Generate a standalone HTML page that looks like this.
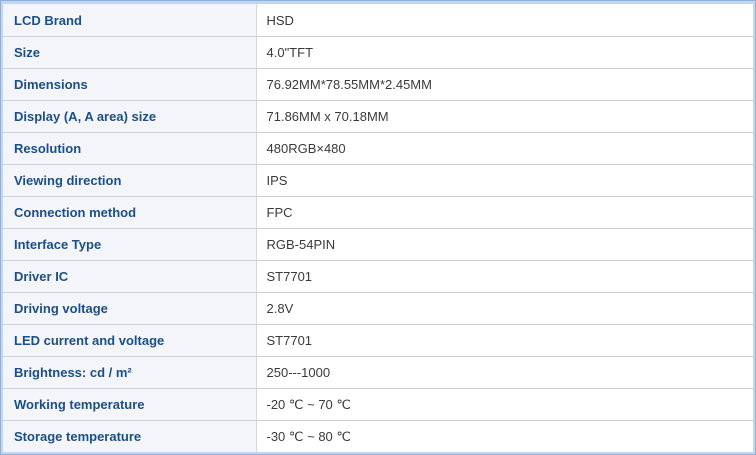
<!DOCTYPE html>
<html><head><meta charset="utf-8"><style>
*{margin:0;padding:0;box-sizing:border-box}
body{width:756px;height:455px;background:#fff;overflow:hidden;font-family:"Liberation Sans",Arial,sans-serif}
.wrap{position:absolute;left:0;top:0;width:756px;height:455px;border:1px solid #8fb0d8;background:#c2d6ee;padding:3px 2px 1px 2px}
table{border-collapse:collapse;width:750px;background:#fff}
td{height:32px;border-top:1px solid #cfcfcf;font-size:13px;vertical-align:middle;padding-top:1px}
tr:first-child td{border-top:none;height:32px}
td.k{width:253px;background:#f3f5f8;color:#1b4f86;font-weight:bold;padding-left:11px;border-right:1px solid #d6d6d6}
td.v{color:#3a3a3a;padding-left:10px}
</style></head><body><div class="wrap"><table>
<tr><td class="k">LCD Brand</td><td class="v">HSD</td></tr>
<tr><td class="k">Size</td><td class="v">4.0"TFT</td></tr>
<tr><td class="k">Dimensions</td><td class="v">76.92MM*78.55MM*2.45MM</td></tr>
<tr><td class="k">Display (A, A area) size</td><td class="v">71.86MM x 70.18MM</td></tr>
<tr><td class="k">Resolution</td><td class="v">480RGB×480</td></tr>
<tr><td class="k">Viewing direction</td><td class="v">IPS</td></tr>
<tr><td class="k">Connection method</td><td class="v">FPC</td></tr>
<tr><td class="k">Interface Type</td><td class="v">RGB-54PIN</td></tr>
<tr><td class="k">Driver IC</td><td class="v">ST7701</td></tr>
<tr><td class="k">Driving voltage</td><td class="v">2.8V</td></tr>
<tr><td class="k">LED current and voltage</td><td class="v">ST7701</td></tr>
<tr><td class="k">Brightness: cd / m²</td><td class="v">250---1000</td></tr>
<tr><td class="k">Working temperature</td><td class="v">-20 ℃ ~ 70 ℃</td></tr>
<tr><td class="k">Storage temperature</td><td class="v">-30 ℃ ~ 80 ℃</td></tr>
</table></div></body></html>
